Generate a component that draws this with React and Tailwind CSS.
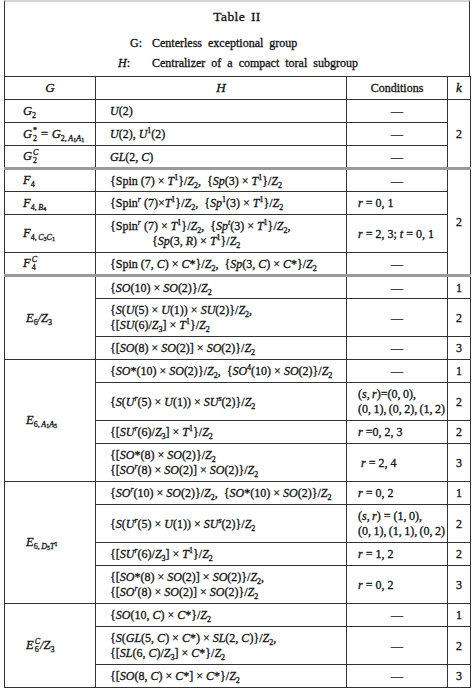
import React from "react";

const lb = "{";
const rb = "}";

const Sb = ({ children }) => (
  <span className="relative top-[3px] text-[8px] leading-none not-italic">{children}</span>
);
const Sp = ({ children }) => (
  <span className="relative top-[-5px] text-[8px] leading-none not-italic">{children}</span>
);
const Tn = ({ children }) => (
  <span className="relative top-[1px] text-[6px] leading-none not-italic">{children}</span>
);
const TnUp = ({ children }) => (
  <span className="relative top-[-3px] text-[6px] leading-none not-italic">{children}</span>
);
const Stk = ({ sup, sub }) => (
  <span className="inline-flex flex-col align-[5px] text-[8px] leading-[8px] ml-[1px] not-italic">
    <span>{sup}</span>
    <span>{sub}</span>
  </span>
);

const Z = ({ n = 2 }) => (
  <>
    <i>Z</i>
    <Sb>{n}</Sb>
  </>
);
const T1 = () => (
  <>
    <i>T</i>
    <Sp>1</Sp>
  </>
);
const Cs = () => (
  <>
    <i>C</i>*
  </>
);

const C = "border border-[#333] p-0 align-middle";
const G = C + " pl-[18px] text-left italic text-[12.5px]";
const GE = C + " pl-[21px] text-left italic text-[12.5px]";
const H = C + " pl-[14px] text-left";
const D = C + " text-center";
const R = C + " pl-[11px] text-left";
const K = C + " text-center";
const TK = " border-b-[3px] border-b-[#9a9a9a]";

const Two = ({ a, b, indent }) => (
  <div className="leading-[15px]">
    <div>{a}</div>
    <div className={indent ? "pl-[42px]" : ""}>{b}</div>
  </div>
);

const dash = "—";

export default function App() {
  return (
    <div className="w-[474px] h-[694px] overflow-hidden bg-white text-[#111] font-['Liberation_Serif',serif] text-[12px] [-webkit-text-stroke:0.3px]">
      {/* title block */}
      <div className="ml-[4px] w-[466px] border-x border-t-2 border-x-[#333] border-t-[#d4d4d4] pt-[5px] pb-[3px]">
        <div className="h-[20px] leading-[20px] text-center text-[13.5px] tracking-[0.4px] [word-spacing:2px]">
          Table II
        </div>
        <div className="mt-[6px] flex h-[20px] items-center pl-[125px] [word-spacing:3px]">
          <span className="w-[22px]">G:</span>
          <span>Centerless exceptional group</span>
        </div>
        <div className="flex h-[20px] items-center pl-[113px] [word-spacing:3px]">
          <span className="w-[34px]">
            <i>H</i>:
          </span>
          <span>Centralizer of a compact toral subgroup</span>
        </div>
      </div>

      <table className="ml-[4px] w-[466px] table-fixed border-collapse">
        <colgroup>
          <col className="w-[91px]" />
          <col className="w-[251px]" />
          <col className="w-[101px]" />
          <col className="w-[23px]" />
        </colgroup>
        <tbody>
          <tr className="h-[23px]">
            <th className={C + " italic font-normal text-[13px]"}>G</th>
            <th className={C + " italic font-normal text-[13px]"}>H</th>
            <th className={C + " font-normal"}>Conditions</th>
            <th className={C + " italic font-normal text-[13px]"}>k</th>
          </tr>

          {/* G2 group */}
          <tr className="h-[23px]">
            <td className={G}>
              G<Sb>2</Sb>
            </td>
            <td className={H}>
              <i>U</i>(2)
            </td>
            <td className={D}>{dash}</td>
            <td className={K + TK} rowSpan={3}>
              2
            </td>
          </tr>
          <tr className="h-[23px]">
            <td className={G}>
              G<Stk sup="*" sub="2" /> = G
              <Sb>
                2,&thinsp;<i>A</i>
                <Tn>1</Tn>
                <i>A</i>
                <Tn>1</Tn>
              </Sb>
            </td>
            <td className={H}>
              <i>U</i>(2), <i>U</i>
              <Sp>1</Sp>(2)
            </td>
            <td className={D}>{dash}</td>
          </tr>
          <tr className="h-[23px]">
            <td className={G + TK}>
              G<Stk sup={<i>C</i>} sub="2" />
            </td>
            <td className={H + TK}>
              <i>GL</i>(2, <i>C</i>)
            </td>
            <td className={D + TK}>{dash}</td>
          </tr>

          {/* F4 group */}
          <tr className="h-[23px]">
            <td className={G}>
              F<Sb>4</Sb>
            </td>
            <td className={H}>
              {lb}Spin (7) × <T1 />
              {rb}/<Z />,&ensp;{lb}
              <i>Sp</i>(3) × <T1 />
              {rb}/<Z />
            </td>
            <td className={D}>{dash}</td>
            <td className={K + TK} rowSpan={4}>
              2
            </td>
          </tr>
          <tr className="h-[23px]">
            <td className={G}>
              F
              <Sb>
                4,&thinsp;<i>B</i>
                <Tn>4</Tn>
              </Sb>
            </td>
            <td className={H}>
              {lb}Spin<Sp><i>r</i></Sp> (7)×<T1 />
              {rb}/<Z />,&ensp;{lb}
              <i>Sp</i>
              <Sp>1</Sp>(3) × <T1 />
              {rb}/<Z />
            </td>
            <td className={R}>
              <i>r</i> = 0, 1
            </td>
          </tr>
          <tr className="h-[38px]">
            <td className={G}>
              F
              <Sb>
                4,&thinsp;<i>C</i>
                <Tn>3</Tn>
                <i>C</i>
                <Tn>1</Tn>
              </Sb>
            </td>
            <td className={H}>
              <Two
                indent
                a={
                  <>
                    {lb}Spin<Sp><i>r</i></Sp> (7) × <T1 />
                    {rb}/<Z />,&ensp;{lb}
                    <i>Sp</i>
                    <Sp><i>t</i></Sp>(3) × <T1 />
                    {rb}/<Z />,
                  </>
                }
                b={
                  <>
                    {lb}
                    <i>Sp</i>(3, <i>R</i>) × <T1 />
                    {rb}/<Z />
                  </>
                }
              />
            </td>
            <td className={R}>
              <i>r</i> = 2, 3; <i>t</i> = 0, 1
            </td>
          </tr>
          <tr className="h-[23px]">
            <td className={G + TK}>
              F<Stk sup={<i>C</i>} sub="4" />
            </td>
            <td className={H + TK}>
              {lb}Spin (7, <i>C</i>) × <Cs />
              {rb}/<Z />,&ensp;{lb}
              <i>Sp</i>(3, <i>C</i>) × <Cs />
              {rb}/<Z />
            </td>
            <td className={D + TK}>{dash}</td>
          </tr>

          {/* E6/Z3 */}
          <tr className="h-[23px]">
            <td className={GE} rowSpan={3}>
              E<Sb>6</Sb>/Z<Sb>3</Sb>
            </td>
            <td className={H}>
              {lb}
              <i>SO</i>(10) × <i>SO</i>(2){rb}/<Z />
            </td>
            <td className={D}>{dash}</td>
            <td className={K}>1</td>
          </tr>
          <tr className="h-[38px]">
            <td className={H}>
              <Two
                a={
                  <>
                    {lb}
                    <i>S</i>(<i>U</i>(5) × <i>U</i>(1)) × <i>SU</i>(2){rb}/<Z />,
                  </>
                }
                b={
                  <>
                    {lb}[<i>SU</i>(6)/<Z n="3" />] × <T1 />
                    {rb}/<Z />
                  </>
                }
              />
            </td>
            <td className={D}>{dash}</td>
            <td className={K}>2</td>
          </tr>
          <tr className="h-[23px]">
            <td className={H}>
              {lb}[<i>SO</i>(8) × <i>SO</i>(2)] × <i>SO</i>(2){rb}/<Z />
            </td>
            <td className={D}>{dash}</td>
            <td className={K}>3</td>
          </tr>

          {/* E6,A1A5 */}
          <tr className="h-[23px]">
            <td className={GE} rowSpan={4}>
              E
              <Sb>
                6,&thinsp;<i>A</i>
                <Tn>1</Tn>
                <i>A</i>
                <Tn>5</Tn>
              </Sb>
            </td>
            <td className={H}>
              {lb}
              <i>SO</i>*(10) × <i>SO</i>(2){rb}/<Z />,&ensp;{lb}
              <i>SO</i>
              <Sp>4</Sp>(10) × <i>SO</i>(2){rb}/<Z />
            </td>
            <td className={D}>{dash}</td>
            <td className={K}>1</td>
          </tr>
          <tr className="h-[38px]">
            <td className={H}>
              {lb}
              <i>S</i>(<i>U</i>
              <Sp><i>r</i></Sp>(5) × <i>U</i>(1)) × <i>SU</i>
              <Sp><i>s</i></Sp>(2){rb}/<Z />
            </td>
            <td className={R}>
              <Two
                a={
                  <>
                    (<i>s</i>,&thinsp;<i>r</i>)=(0,&thinsp;0),
                  </>
                }
                b={<>(0,&thinsp;1),&thinsp;(0,&thinsp;2),&thinsp;(1,&thinsp;2)</>}
              />
            </td>
            <td className={K}>2</td>
          </tr>
          <tr className="h-[23px]">
            <td className={H}>
              {lb}[<i>SU</i>
              <Sp><i>r</i></Sp>(6)/<Z n="3" />] × <T1 />
              {rb}/<Z />
            </td>
            <td className={R}>
              <i>r</i> =0, 2, 3
            </td>
            <td className={K}>2</td>
          </tr>
          <tr className="h-[38px]">
            <td className={H}>
              <Two
                a={
                  <>
                    {lb}[<i>SO</i>*(8) × <i>SO</i>(2){rb}/<Z />
                  </>
                }
                b={
                  <>
                    {lb}[<i>SO</i>
                    <Sp><i>r</i></Sp>(8) × <i>SO</i>(2)] × <i>SO</i>(2){rb}/<Z />
                  </>
                }
              />
            </td>
            <td className={R}>
              <span className="pl-[3px]">
                <i>r</i> = 2, 4
              </span>
            </td>
            <td className={K}>3</td>
          </tr>

          {/* E6,D5T1 */}
          <tr className="h-[23px]">
            <td className={GE} rowSpan={4}>
              E
              <Sb>
                6,&thinsp;<i>D</i>
                <Tn>5</Tn>
                <i>T</i>
                <TnUp>1</TnUp>
              </Sb>
            </td>
            <td className={H}>
              {lb}
              <i>SO</i>
              <Sp><i>r</i></Sp>(10) × <i>SO</i>(2){rb}/<Z />,&ensp;{lb}
              <i>SO</i>*(10) × <i>SO</i>(2){rb}/<Z />
            </td>
            <td className={R}>
              <i>r</i> = 0, 2
            </td>
            <td className={K}>1</td>
          </tr>
          <tr className="h-[38px]">
            <td className={H}>
              {lb}
              <i>S</i>(<i>U</i>
              <Sp><i>r</i></Sp>(5) × <i>U</i>(1)) × <i>SU</i>
              <Sp><i>s</i></Sp>(2){rb}/<Z />
            </td>
            <td className={R}>
              <Two
                a={
                  <>
                    (<i>s</i>,&thinsp;<i>r</i>) = (1,&thinsp;0),
                  </>
                }
                b={<>(0,&thinsp;1),&thinsp;(1,&thinsp;1),&thinsp;(0,&thinsp;2)</>}
              />
            </td>
            <td className={K}>2</td>
          </tr>
          <tr className="h-[23px]">
            <td className={H}>
              {lb}[<i>SU</i>
              <Sp><i>r</i></Sp>(6)/<Z n="3" />] × <T1 />
              {rb}/<Z />
            </td>
            <td className={R}>
              <i>r</i> = 1, 2
            </td>
            <td className={K}>2</td>
          </tr>
          <tr className="h-[38px]">
            <td className={H}>
              <Two
                a={
                  <>
                    {lb}[<i>SO</i>*(8) × <i>SO</i>(2)] × <i>SO</i>(2){rb}/<Z />,
                  </>
                }
                b={
                  <>
                    {lb}[<i>SO</i>
                    <Sp><i>r</i></Sp>(8) × <i>SO</i>(2)] × <i>SO</i>(2){rb}/<Z />
                  </>
                }
              />
            </td>
            <td className={R}>
              <i>r</i> = 0, 2
            </td>
            <td className={K}>3</td>
          </tr>

          {/* E6C/Z3 */}
          <tr className="h-[23px]">
            <td className={GE} rowSpan={3}>
              E<Stk sup={<i>C</i>} sub="6" />/Z<Sb>3</Sb>
            </td>
            <td className={H}>
              {lb}
              <i>SO</i>(10, <i>C</i>) × <Cs />
              {rb}/<Z />
            </td>
            <td className={D}>{dash}</td>
            <td className={K}>1</td>
          </tr>
          <tr className="h-[38px]">
            <td className={H}>
              <Two
                a={
                  <>
                    {lb}
                    <i>S</i>(<i>GL</i>(5, <i>C</i>) × <Cs />) × <i>SL</i>(2, <i>C</i>){rb}/<Z />,
                  </>
                }
                b={
                  <>
                    {lb}[<i>SL</i>(6, <i>C</i>)/<Z n="3" />] × <Cs />
                    {rb}/<Z />
                  </>
                }
              />
            </td>
            <td className={D}>{dash}</td>
            <td className={K}>2</td>
          </tr>
          <tr className="h-[23px]">
            <td className={H}>
              {lb}[<i>SO</i>(8, <i>C</i>) × <Cs />] × <Cs />
              {rb}/<Z />
            </td>
            <td className={D}>{dash}</td>
            <td className={K}>3</td>
          </tr>
        </tbody>
      </table>
    </div>
  );
}
